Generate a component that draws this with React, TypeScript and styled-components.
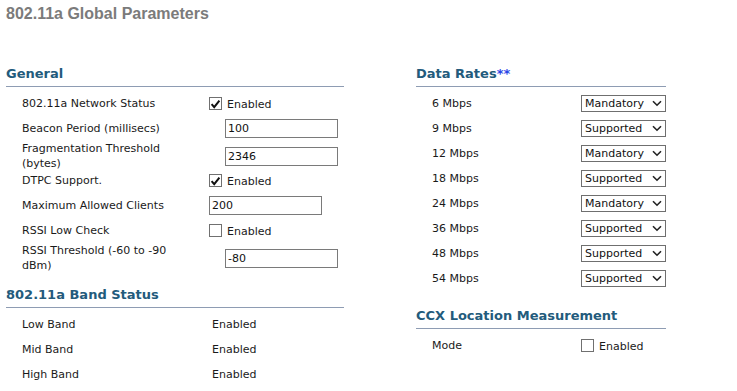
import React from "react";
import styled, { createGlobalStyle } from "styled-components";

const GlobalStyle = createGlobalStyle`
  html, body {
    margin: 0;
    padding: 0;
    background: #ffffff;
  }
  body {
    font-family: "DejaVu Sans", Verdana, sans-serif;
    font-size: 11px;
    color: #1a1a1a;
  }
`;

type Rate = { label: string; value: string };

const dataRates: Rate[] = [
  { label: "6 Mbps", value: "Mandatory" },
  { label: "9 Mbps", value: "Supported" },
  { label: "12 Mbps", value: "Mandatory" },
  { label: "18 Mbps", value: "Supported" },
  { label: "24 Mbps", value: "Mandatory" },
  { label: "36 Mbps", value: "Supported" },
  { label: "48 Mbps", value: "Supported" },
  { label: "54 Mbps", value: "Supported" },
];

const bands = ["Low Band", "Mid Band", "High Band"];

const CheckMark = () => (
  <svg width="11" height="11" viewBox="0 0 11 11">
    <path d="M1.6 5.2 L4.2 8.2 L9.4 1.6" fill="none" stroke="#111" strokeWidth="2" />
  </svg>
);

const Chevron = () => (
  <svg width="10" height="7" viewBox="0 0 10 7">
    <path d="M1 1.2 L5 5.2 L9 1.2" fill="none" stroke="#222" strokeWidth="1.6" />
  </svg>
);

const Check = ({ checked }: { checked?: boolean }) => (
  <CheckField>
    <CheckBox>{checked && <CheckMark />}</CheckBox>
    <span>Enabled</span>
  </CheckField>
);

const Select = ({ value }: { value: string }) => (
  <SelectWrap>
    <SelectBox defaultValue={value}>
      <option>Mandatory</option>
      <option>Supported</option>
      <option>Disabled</option>
    </SelectBox>
    <ChevronSlot>
      <Chevron />
    </ChevronSlot>
  </SelectWrap>
);

const App = () => {
  return (
    <>
      <GlobalStyle />
      <Page>
        <Title>802.11a Global Parameters</Title>
        <Columns>
          <LeftCol>
            <Section>
              <Header>General</Header>
              <Rows>
                <Row>
                  <Label>802.11a Network Status</Label>
                  <Value>
                    <Check checked />
                  </Value>
                </Row>
                <Row>
                  <Label>Beacon Period (millisecs)</Label>
                  <Value>
                    <TextInput defaultValue="100" $indent />
                  </Value>
                </Row>
                <Row $tall>
                  <Label>Fragmentation Threshold (bytes)</Label>
                  <Value>
                    <TextInput defaultValue="2346" $indent />
                  </Value>
                </Row>
                <Row>
                  <Label>DTPC Support.</Label>
                  <Value>
                    <Check checked />
                  </Value>
                </Row>
                <Row>
                  <Label>Maximum Allowed Clients</Label>
                  <Value>
                    <TextInput defaultValue="200" />
                  </Value>
                </Row>
                <Row>
                  <Label>RSSI Low Check</Label>
                  <Value>
                    <Check />
                  </Value>
                </Row>
                <Row $tall>
                  <Label>RSSI Threshold (-60 to -90 dBm)</Label>
                  <Value>
                    <TextInput defaultValue="-80" $indent />
                  </Value>
                </Row>
              </Rows>
            </Section>
            <Section $gap={17}>
              <Header>802.11a Band Status</Header>
              <Rows>
                {bands.map((b) => (
                  <Row key={b}>
                    <Label>{b}</Label>
                    <StatusText>Enabled</StatusText>
                  </Row>
                ))}
              </Rows>
            </Section>
          </LeftCol>
          <RightCol>
            <Section>
              <Header>
                Data Rates<Stars>**</Stars>
              </Header>
              <Rows>
                {dataRates.map((r) => (
                  <Row key={r.label} $narrow>
                    <Label>{r.label}</Label>
                    <Value>
                      <Select value={r.value} />
                    </Value>
                  </Row>
                ))}
              </Rows>
            </Section>
            <Section $gap={17}>
              <Header>CCX Location Measurement</Header>
              <Rows>
                <Row $narrow>
                  <Label>Mode</Label>
                  <Value>
                    <Check />
                  </Value>
                </Row>
              </Rows>
            </Section>
          </RightCol>
        </Columns>
      </Page>
    </>
  );
};

export default App;

const Page = styled.div`
  padding: 4px 6px;
`;

const Title = styled.h1`
  margin: 0;
  font-family: "Liberation Sans", Arial, sans-serif;
  font-size: 16px;
  line-height: 20px;
  font-weight: 700;
  color: #7b7b7b;
`;

const Columns = styled.div`
  display: flex;
  gap: 72px;
  margin-top: 42px;
`;

const LeftCol = styled.div`
  width: 338px;
`;

const RightCol = styled.div`
  width: 250px;
`;

const Section = styled.section<{ $gap?: number }>`
  margin-top: ${(p) => p.$gap ?? 0}px;
`;

const Header = styled.div`
  font-weight: 700;
  font-size: 13px;
  line-height: 16px;
  color: #235b7c;
  padding-bottom: 4px;
  border-bottom: 1px solid #8e9cb3;
`;

const Stars = styled.span`
  color: #2b45e6;
`;

const Rows = styled.div`
  margin-top: 4px;
  display: flex;
  flex-direction: column;
`;

const Row = styled.div<{ $tall?: boolean; $narrow?: boolean }>`
  display: grid;
  grid-template-columns: ${(p) => (p.$narrow ? "165px" : "203px")} 1fr;
  align-items: center;
  height: ${(p) => (p.$tall ? "27px" : "25px")};
`;

const Label = styled.div`
  padding-left: 16px;
  padding-right: 20px;
  line-height: 15px;
`;

const Value = styled.div`
  display: flex;
  align-items: center;
`;

const StatusText = styled.div`
  padding-left: 3px;
`;

const CheckField = styled.label`
  display: flex;
  align-items: center;
  gap: 5px;
  line-height: 15px;
  & > span {
    padding-top: 2px;
  }
`;

const CheckBox = styled.span`
  box-sizing: border-box;
  width: 13px;
  height: 13px;
  border: 1px solid #707070;
  background: #ffffff;
  display: flex;
  align-items: center;
  justify-content: center;
`;

const TextInput = styled.input<{ $indent?: boolean }>`
  box-sizing: border-box;
  width: 113px;
  height: 19px;
  margin: 0 0 0 ${(p) => (p.$indent ? "16px" : "0")};
  padding: 0 2px;
  border: 1px solid #7a7a7a;
  border-radius: 0;
  font-family: "DejaVu Sans", Verdana, sans-serif;
  font-size: 11px;
  color: #111;
  outline: none;
`;

const SelectWrap = styled.div`
  position: relative;
  width: 85px;
  height: 17px;
`;

const SelectBox = styled.select`
  appearance: none;
  box-sizing: border-box;
  width: 85px;
  height: 17px;
  margin: 0;
  padding: 0 0 0 3px;
  border: 1px solid #6f6f6f;
  border-radius: 0;
  background: #ffffff;
  font-family: "DejaVu Sans", Verdana, sans-serif;
  font-size: 11px;
  color: #111;
  outline: none;
`;

const ChevronSlot = styled.span`
  position: absolute;
  right: 4px;
  top: 5px;
  display: flex;
  pointer-events: none;
`;
